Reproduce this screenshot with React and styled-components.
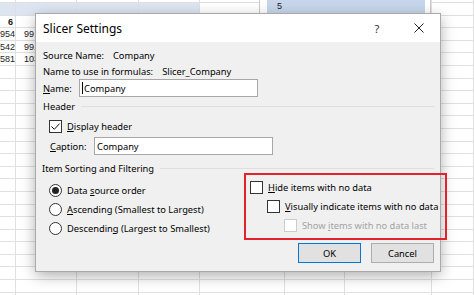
import React from "react";
import styled, { createGlobalStyle } from "styled-components";

const GlobalStyle = createGlobalStyle`
  html, body { margin: 0; padding: 0; }
  body { width: 474px; height: 295px; overflow: hidden; background: #fff; }
`;

const UI_FONT = `"Noto Sans", "Open Sans", sans-serif`;

const COLS = [16, 61, 62, 61, 85, 60, 87, 42];
const ROWS = 25;

const sheetText = {
  "2-0": "6",
  "3-0": "954",
  "3-1": "99",
  "4-0": "542",
  "4-1": "99,",
  "5-0": "581",
  "5-1": "103",
};

const Screen = styled.div`
  position: relative;
  width: 474px;
  height: 295px;
  overflow: hidden;
  background: #fff;
`;

const Sheet = styled.div`
  display: grid;
  grid-template-columns: ${COLS.map((c) => c + "px").join(" ")};
  grid-auto-rows: 12.6px;
  margin-top: -9.6px;
  font-family: "Liberation Sans", sans-serif;
  font-size: 9px;
  color: #222;
`;

const Cell = styled.div`
  box-sizing: border-box;
  border-right: 1px solid #e0e0e0;
  border-bottom: 1px solid #e0e0e0;
  background: ${(p) => (p.$band ? "#dce5f1" : "#fff")};
  text-align: ${(p) => (p.$first ? "right" : "left")};
  padding: ${(p) => (p.$first ? "0 2px 0 0" : "0 0 0 8px")};
  line-height: 12px;
  font-weight: ${(p) => (p.$bold ? 700 : 400)};
  white-space: nowrap;
  overflow: hidden;
`;

const TopTile = styled.div`
  position: absolute;
  left: 259px;
  top: 0;
  width: 172px;
  height: 15px;
  background: #fff;
  border-left: 1px solid #c9c9c9;
  border-right: 1px solid #c9c9c9;
  padding-left: 7px;
  box-sizing: border-box;
`;

const TileFill = styled.div`
  width: 158px;
  height: 14px;
  box-sizing: border-box;
  background: #c7d6eb;
  border-bottom: 1px solid #9bb1d2;
  padding-left: 10px;
  font-family: "Liberation Sans", sans-serif;
  font-size: 9px;
  line-height: 12px;
  color: #222;
`;

const Dialog = styled.div`
  position: absolute;
  left: 36px;
  top: 14px;
  width: 404px;
  height: 257px;
  background: #f0f0f0;
  box-shadow: 0 0 0 1px #a9a9a9, 0 4px 14px rgba(0, 0, 0, 0.35);
  font-family: ${UI_FONT};
  font-size: 9.3px;
  color: #000;
  display: flex;
  flex-direction: column;
`;

const TitleBar = styled.div`
  height: 28px;
  flex-shrink: 0;
  background: #fff;
  display: flex;
  align-items: center;
  padding-left: 7px;
`;

const Title = styled.div`
  flex: 1;
  font-size: 12px;
`;

const TitleButton = styled.div`
  width: 42px;
  height: 28px;
  display: flex;
  align-items: center;
  justify-content: center;
  font-size: 11px;
  color: #333;
`;

const Body = styled.div`
  flex: 1;
  padding: 5px 6px 0 7px;
  display: flex;
  flex-direction: column;
`;

const InfoRow = styled.div`
  height: 16px;
  display: flex;
  align-items: center;
  gap: 9px;
  white-space: nowrap;
`;

const FieldRow = styled.div`
  height: 18px;
  display: flex;
  align-items: center;
  padding-left: ${(p) => p.$indent || 0}px;
  margin-top: ${(p) => p.$top || 0}px;
`;

const FieldLabel = styled.div`
  width: ${(p) => p.$w}px;
  flex-shrink: 0;
`;

const Input = styled.div`
  width: 179px;
  height: 18px;
  box-sizing: border-box;
  background: #fff;
  border: 1px solid #a7a7a7;
  display: flex;
  align-items: center;
  padding-left: 2px;
`;

const Caret = styled.span`
  width: 1px;
  height: 12px;
  background: #000;
  margin-right: 1px;
`;

const Heading = styled.div`
  height: ${(p) => p.$h}px;
  margin-top: ${(p) => p.$top || 0}px;
  display: flex;
  align-items: center;
  gap: 6px;
  margin-left: ${(p) => p.$shift || 0}px;
  &::after {
    content: "";
    flex: 1;
    height: 1px;
    background: #dedede;
  }
`;

const CheckRow = styled.div`
  height: 18px;
  display: flex;
  align-items: center;
  gap: 5px;
  padding-left: ${(p) => p.$indent || 0}px;
  margin-top: ${(p) => p.$top || 0}px;
  color: ${(p) => (p.$disabled ? "#a3a3a3" : "#000")};
  white-space: nowrap;
`;

const Box = styled.span`
  width: 13px;
  height: 13px;
  box-sizing: border-box;
  flex-shrink: 0;
  background: #fff;
  border: 1px solid ${(p) => (p.$disabled ? "#cccccc" : "#333")};
  display: flex;
  align-items: center;
  justify-content: center;
`;

const Radio = styled.span`
  width: 13px;
  height: 13px;
  box-sizing: border-box;
  flex-shrink: 0;
  border-radius: 50%;
  background: #fff;
  border: 1px solid #333;
  display: flex;
  align-items: center;
  justify-content: center;
  &::after {
    content: "";
    width: 7px;
    height: 7px;
    border-radius: 50%;
    background: ${(p) => (p.$on ? "#222" : "transparent")};
  }
`;

const Options = styled.div`
  display: flex;
  margin-top: -1px;
`;

const RadioColumn = styled.div`
  width: 201px;
  flex-shrink: 0;
  box-sizing: border-box;
  padding: 8px 0 0 6px;
  display: flex;
  flex-direction: column;
  gap: 1px;
`;

const Highlight = styled.div`
  width: 203px;
  height: 67px;
  flex-shrink: 0;
  box-sizing: border-box;
  border: 2px solid #e3222c;
  padding: 3px 0 0 4px;
  display: flex;
  flex-direction: column;
  gap: 1px;
`;

const Buttons = styled.div`
  display: flex;
  justify-content: flex-end;
  gap: 10px;
  margin-top: 3px;
`;

const Button = styled.div`
  width: 63px;
  height: 20px;
  box-sizing: border-box;
  background: #e1e1e1;
  border: 1px solid ${(p) => (p.$primary ? "#0078d7" : "#adadad")};
  display: flex;
  align-items: center;
  justify-content: center;
`;

const Check = () => (
  <svg width="11" height="11" viewBox="0 0 11 11">
    <path d="M1.5 5.5 L4.3 8.3 L9.6 2.6" fill="none" stroke="#111" strokeWidth="1" />
  </svg>
);

const CheckBox = ({ checked, disabled, indent, children }) => (
  <CheckRow $indent={indent} $disabled={disabled}>
    <Box $disabled={disabled}>{checked && <Check />}</Box>
    <span>{children}</span>
  </CheckRow>
);

const RadioOption = ({ on, children }) => (
  <CheckRow>
    <Radio $on={on} />
    <span>{children}</span>
  </CheckRow>
);

export default function App() {
  const cells = [];
  for (let r = 0; r < ROWS; r++) {
    for (let c = 0; c < COLS.length; c++) {
      cells.push(
        <Cell key={r + "-" + c} $first={c === 0} $band={r === 1 && c < 4} $bold={r === 2}>
          {sheetText[r + "-" + c] || ""}
        </Cell>
      );
    }
  }

  return (
    <Screen>
      <GlobalStyle />
      <Sheet>{cells}</Sheet>
      <TopTile>
        <TileFill>5</TileFill>
      </TopTile>

      <Dialog>
        <TitleBar>
          <Title>Slicer Settings</Title>
          <TitleButton>?</TitleButton>
          <TitleButton>
            <svg width="10" height="10" viewBox="0 0 10 10">
              <path d="M0.5 0.5 L9.5 9.5 M9.5 0.5 L0.5 9.5" stroke="#222" strokeWidth="1" />
            </svg>
          </TitleButton>
        </TitleBar>

        <Body>
          <InfoRow>
            <span>Source Name:</span>
            <span>Company</span>
          </InfoRow>
          <InfoRow>
            <span>Name to use in formulas:</span>
            <span>Slicer_Company</span>
          </InfoRow>
          <FieldRow>
            <FieldLabel $w={36}>
              <u>N</u>ame:
            </FieldLabel>
            <Input>
              <Caret />
              Company
            </Input>
          </FieldRow>

          <Heading $h={18}>Header</Heading>
          <FieldRow $indent={6} $top={2}>
            <CheckBox checked>
              <u>D</u>isplay header
            </CheckBox>
          </FieldRow>
          <FieldRow $indent={7} $top={2}>
            <FieldLabel $w={44}>
              <u>C</u>aption:
            </FieldLabel>
            <Input>Company</Input>
          </FieldRow>

          <Heading $h={12} $top={7} $shift={-1}>
            Item Sorting and Filtering
          </Heading>

          <Options>
            <RadioColumn>
              <RadioOption on>
                Data <u>s</u>ource order
              </RadioOption>
              <RadioOption>
                <u>A</u>scending (Smallest to Largest)
              </RadioOption>
              <RadioOption>
                Descendin<u>g</u> (Largest to Smallest)
              </RadioOption>
            </RadioColumn>
            <Highlight>
              <CheckBox>
                <u>H</u>ide items with no data
              </CheckBox>
              <CheckBox indent={17}>
                <u>V</u>isually indicate items with no data
              </CheckBox>
              <CheckBox indent={34} disabled>
                Show <u>i</u>tems with no data last
              </CheckBox>
            </Highlight>
          </Options>

          <Buttons>
            <Button $primary>OK</Button>
            <Button>Cancel</Button>
          </Buttons>
        </Body>
      </Dialog>
    </Screen>
  );
}
